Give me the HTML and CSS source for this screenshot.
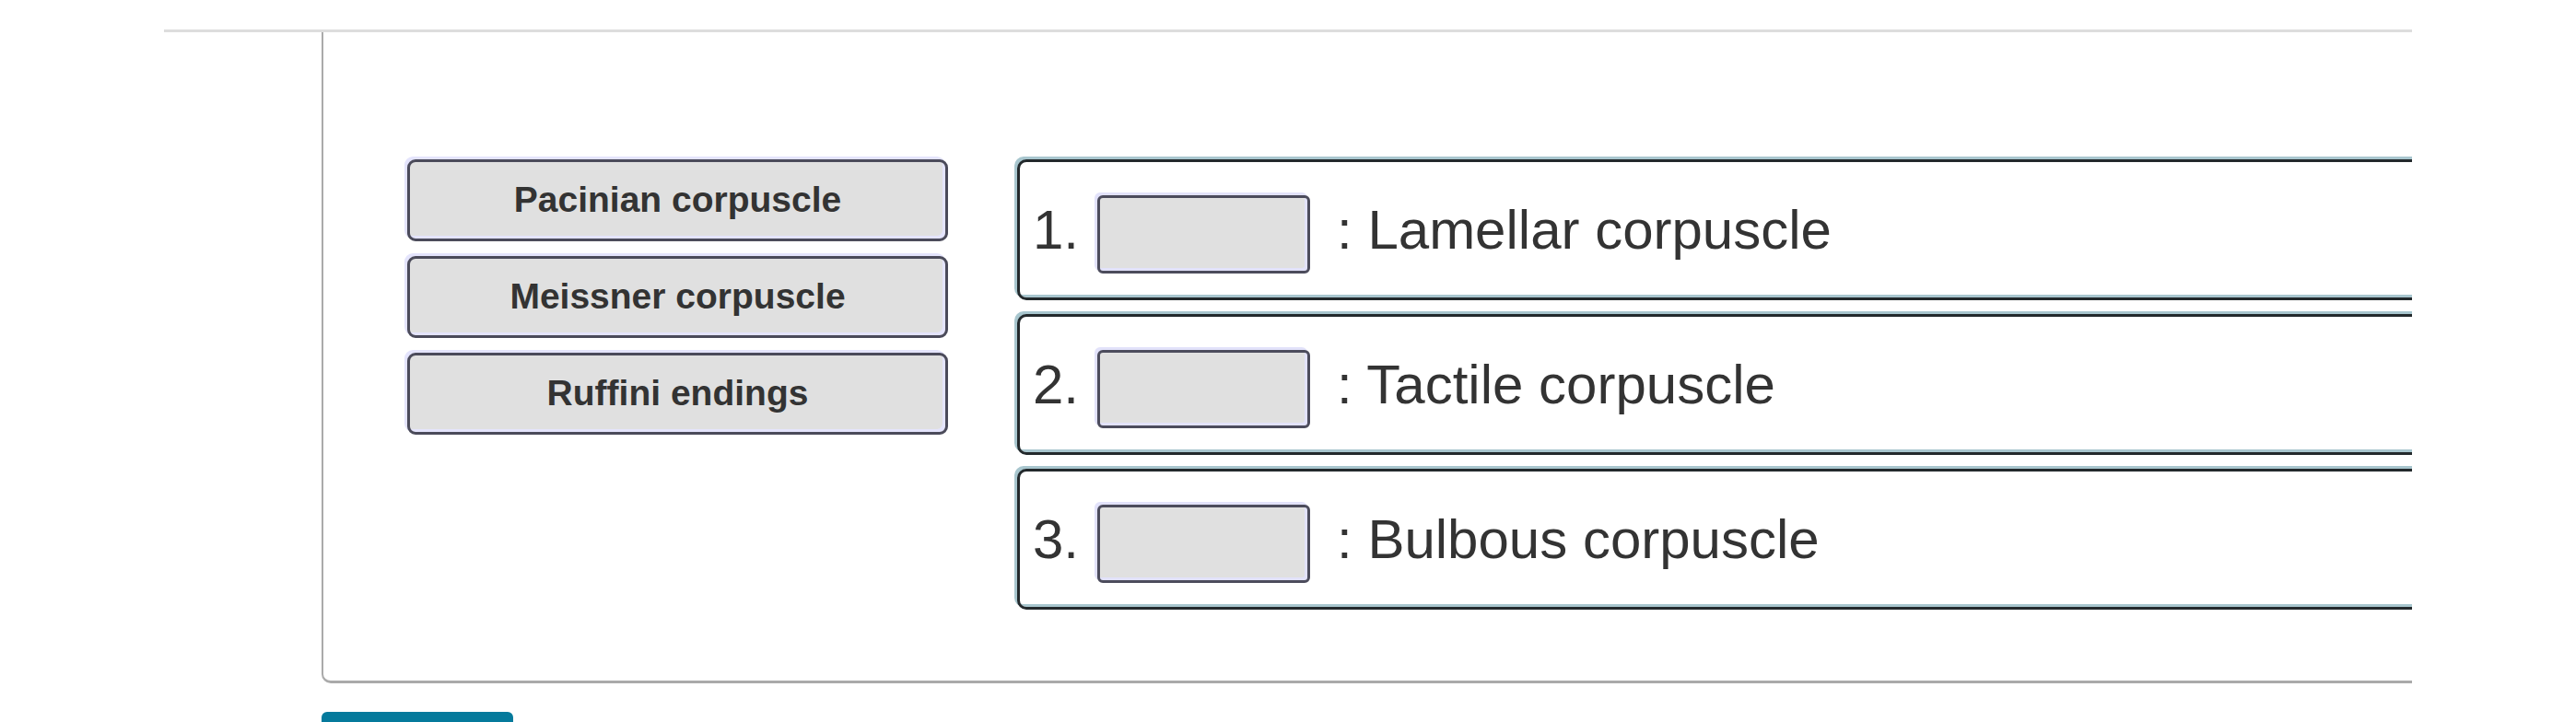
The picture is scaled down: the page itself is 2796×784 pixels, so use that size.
FILE: index.html
```html
<!DOCTYPE html>
<html>
<head>
<meta charset="utf-8">
<title>Matching</title>
<link rel="stylesheet" href="styles.css">
</head>
<body>
<div class="frame">
  <div class="card">
    <div class="choices">
      <div class="choice">Pacinian corpuscle</div>
      <div class="choice">Meissner corpuscle</div>
      <div class="choice">Ruffini endings</div>
    </div>
    <div class="targets">
      <div class="target"><span class="num">1.</span><span class="slot"></span><span class="label">: Lamellar corpuscle</span></div>
      <div class="target"><span class="num">2.</span><span class="slot"></span><span class="label">: Tactile corpuscle</span></div>
      <div class="target"><span class="num">3.</span><span class="slot"></span><span class="label">: Bulbous corpuscle</span></div>
    </div>
  </div>
  <div class="submit"></div>
</div>
</body>
</html>
```
FILE: styles.css
```css
html, body {
  margin: 0;
  padding: 0;
  background: #ffffff;
}
body {
  padding-top: 32px;
  font-family: "Liberation Sans", Arial, Helvetica, sans-serif;
  color: #333333;
}
.frame {
  margin-left: 178px;
  width: 2440px;
  overflow: hidden;
  border-top: 3px solid #dddddd;
}
.card {
  margin-left: 171px;
  width: 3000px;
  box-sizing: border-box;
  border-left: 2px solid #aaaaaa;
  border-bottom: 3px solid #aaaaaa;
  border-bottom-left-radius: 10px;
  padding: 138px 0 77px 91px;
  display: flex;
  align-items: flex-start;
  gap: 75px;
}
.choices {
  display: flex;
  flex-direction: column;
  gap: 16px;
  width: 587px;
  flex: none;
}
.choice {
  height: 89px;
  box-sizing: border-box;
  border: 3px solid #4b4b5a;
  border-radius: 9px;
  background: #e0e0e0;
  box-shadow: -3px -3px 0 #e4e4fc, inset -3px -3px 0 #e4e4fc;
  display: flex;
  align-items: center;
  justify-content: center;
  padding-bottom: 2px;
  font-weight: bold;
  font-size: 39px;
  color: #333333;
  white-space: nowrap;
}
.targets {
  display: flex;
  flex-direction: column;
  gap: 15px;
  width: 1700px;
  flex: none;
}
.target {
  height: 153px;
  box-sizing: border-box;
  border: 3px solid #23292c;
  border-radius: 10px;
  background: #ffffff;
  box-shadow: -3px -3px 0 #a8c6ce, inset -3px -3px 0 #a8c6ce;
  padding: 36px 0 0 14px;
  font-size: 60px;
  line-height: 1;
  white-space: nowrap;
  color: #333333;
}
.slot {
  display: inline-block;
  vertical-align: middle;
  width: 231px;
  height: 85px;
  box-sizing: border-box;
  border: 3px solid #4c4c5c;
  border-radius: 6px;
  background: #e0e0e0;
  box-shadow: -3px -3px 0 #e2e2fa, inset -3px -3px 0 #e2e2fa;
  margin: 0 29px 0 20px;
}
.submit {
  margin-left: 171px;
  margin-top: 31px;
  width: 208px;
  height: 40px;
  background: #057a9c;
  border-radius: 6px 6px 0 0;
}
```
